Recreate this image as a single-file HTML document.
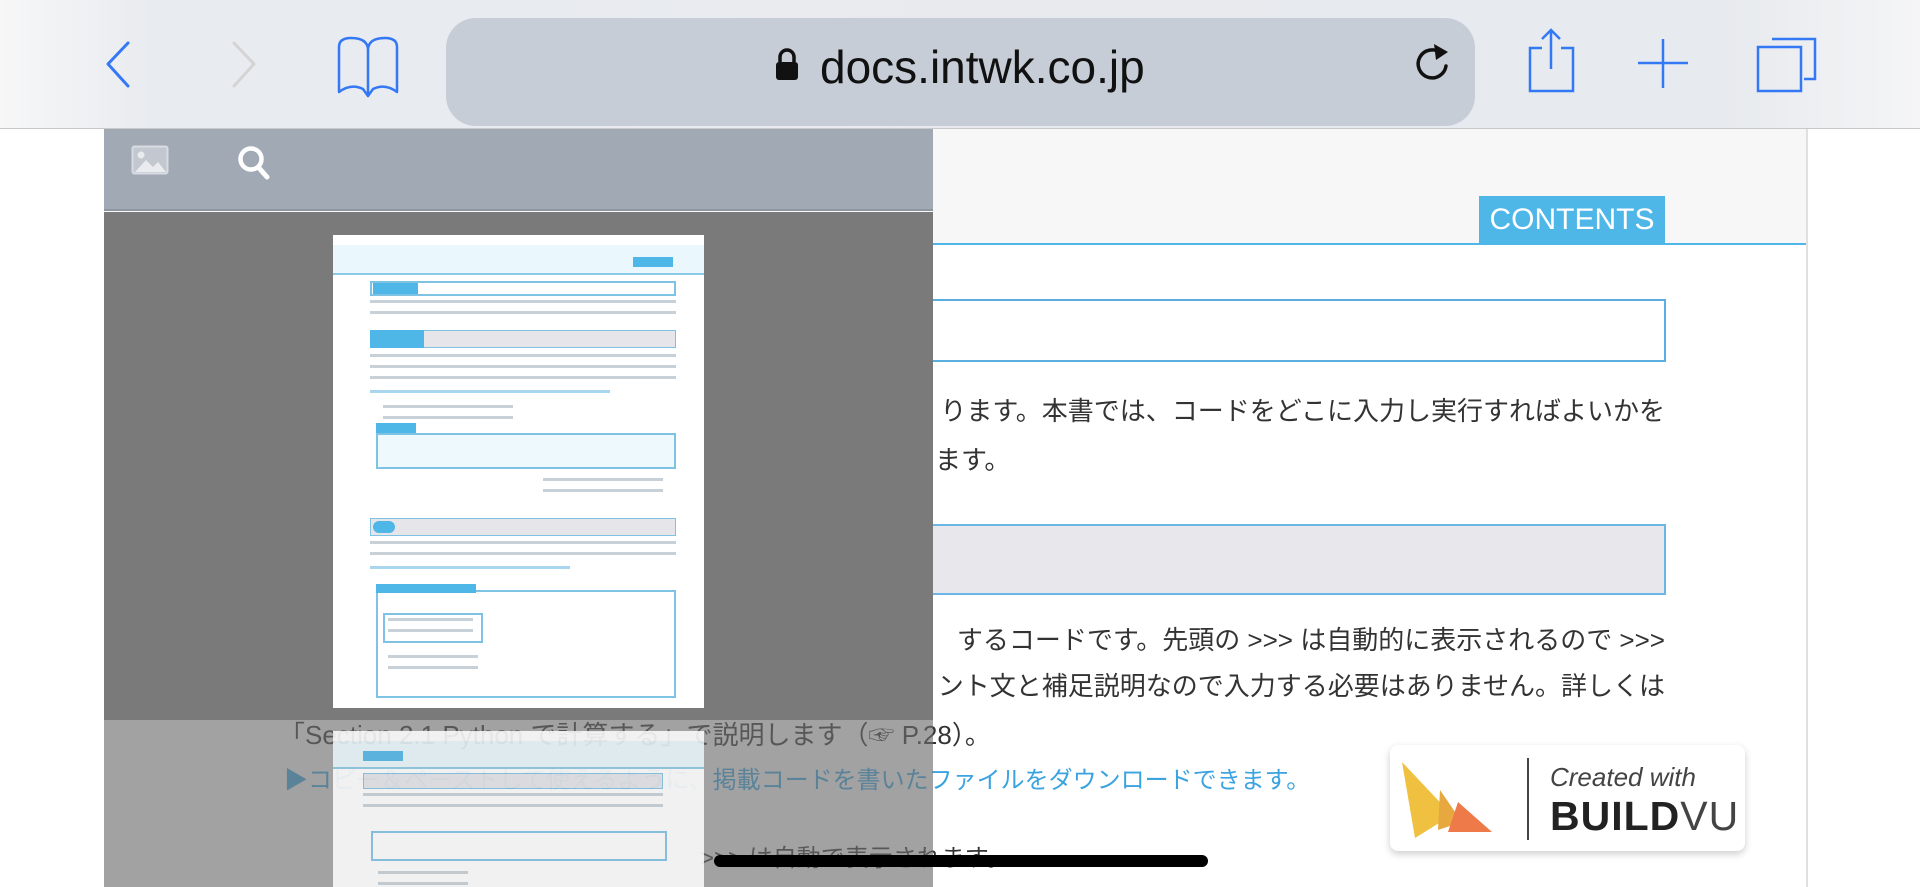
<!DOCTYPE html>
<html><head><meta charset="utf-8"><style>
*{margin:0;padding:0;box-sizing:border-box}
body{width:1920px;height:887px;overflow:hidden;background:#fff;position:relative;font-family:"Liberation Sans","Noto Sans CJK JP",sans-serif}
.abs{position:absolute}
.top{left:0;top:0;width:1920px;height:129px;background:linear-gradient(90deg,#f7f7f7 0,#e8ebef 8%,#e7eaee 90%,#f5f5f6 100%);border-bottom:1px solid #c9c9cc}
.pill{left:446px;top:18px;width:1029px;height:108px;border-radius:30px;background:#c7cdd7}
.url{left:820px;top:40px;font-size:46px;color:#111}
.page{left:104px;top:129px;width:1702px;height:758px;background:#f8f8f8}
.rside{left:1806px;top:129px;width:114px;height:758px;background:#fff;border-left:2px solid #e0e0e0}
.jt{font-size:26px;color:#333;white-space:nowrap;line-height:1}
.thumb{background:#fff;overflow:hidden}
.tl{position:absolute;background:repeating-linear-gradient(180deg,#c8d0d8 0 3px,transparent 3px 11px)}
.tb{position:absolute;background:repeating-linear-gradient(180deg,#a8d6ee 0 3px,transparent 3px 10px)}
</style></head><body>
<div class="abs top"></div>
<svg class="abs" style="left:0;top:0" width="1920" height="129">
<path d="M128 43 L108 64 L128 86" fill="none" stroke="#3478f6" stroke-width="3" stroke-linecap="round" stroke-linejoin="round"/>
<path d="M234 43 L254 64 L234 86" fill="none" stroke="#d4d4d4" stroke-width="3" stroke-linecap="round" stroke-linejoin="round"/>
<path d="M339 92 V47 Q339 38 351 38 Q367 38 368 49 Q369 38 385 38 Q397 38 397 47 V92 Q385 83 373 89 L368 96 L363 89 Q351 83 339 92 Z M368 49 V96" fill="none" stroke="#3478f6" stroke-width="2.5" stroke-linejoin="round"/>
</svg>
<div class="abs pill"></div>
<svg class="abs" style="left:774px;top:46px" width="26" height="36"><path d="M6 16 V11 A7 7 0 0 1 20 11 V16" fill="none" stroke="#111" stroke-width="3.5"/><rect x="2" y="16" width="22" height="18" rx="3" fill="#111"/></svg>
<div class="abs url">docs.intwk.co.jp</div>
<svg class="abs" style="left:1408px;top:38px" width="50" height="50">
<path d="M33 15 A14 14 0 1 0 38 28" fill="none" stroke="#111" stroke-width="3.5" stroke-linecap="round"/>
<path d="M26 6 L40 14 L28 22 Z" fill="#111"/>
</svg>
<svg class="abs" style="left:1520px;top:25px" width="400" height="75" fill="none" stroke="#3478f6" stroke-width="2.5">
<path d="M22 23 H10 V66 H53 V23 H41 M31 5 V44 M22 14 L31 5 L40 14"/>
<path d="M143 14 V63 M118 38 H168"/>
<path d="M252 14 H295 V54 H284 M238 22 H281 V66 H238 Z"/>
</svg>
<div class="abs page"></div>
<div class="abs rside"></div>
<div class="abs" style="left:933px;top:129px;width:873px;height:758px;background:#fff"></div>
<div class="abs" style="left:933px;top:129px;width:873px;height:114px;background:#f7f7f7"></div>
<div class="abs" style="left:1479px;top:196px;width:186px;height:47px;background:#4fb6e8;color:#fff;font-size:30px;line-height:47px;text-align:center">CONTENTS</div>
<div class="abs" style="left:933px;top:243px;width:873px;height:2px;background:#4fb6e8"></div>
<div class="abs" style="left:880px;top:299px;width:786px;height:63px;border:2px solid #5aaee0;background:#fff"></div>
<div class="abs jt" style="right:255px;top:398px">ります。本書では、コードをどこに入力し実行すればよいかを</div>
<div class="abs jt" style="left:935px;top:447px">ます。</div>
<div class="abs" style="left:880px;top:524px;width:786px;height:71px;border:2px solid #6ab6e6;background:#e8e8ec"></div>
<div class="abs jt" style="right:255px;top:627px">するコードです。先頭の &gt;&gt;&gt; は自動的に表示されるので &gt;&gt;&gt;</div>
<div class="abs jt" style="right:255px;top:673px">ント文と補足説明なので入力する必要はありません。詳しくは</div>
<div class="abs jt" style="left:279px;top:722px">「Section 2.1 Python で計算する」で説明します（☞ P.28）。</div>
<div class="abs jt" style="left:284px;top:769px;color:#3aa3e0;font-size:24px">▶コピー＆ペーストして使えるように、掲載コードを書いたファイルをダウンロードできます。</div>
<div class="abs jt" style="left:700px;top:847px;color:#333;font-size:24px">&gt;&gt;&gt; は自動で表示されます。</div>
<!-- left panel -->
<div class="abs" style="left:104px;top:129px;width:829px;height:82px;background:#a1a9b5;border-bottom:2px solid #8e96a2"></div>
<svg class="abs" style="left:131px;top:145px" width="40" height="32"><rect x="1.5" y="1.5" width="35" height="27" rx="2" fill="#c3c8d0" stroke="#d8dce2" stroke-width="2"/><circle cx="10" cy="10" r="3.5" fill="#e9ebee"/><path d="M4 27 L15 15 L22 22 L27 17 L35 27 Z" fill="#e9ebee"/></svg>
<svg class="abs" style="left:236px;top:144px" width="38" height="40"><circle cx="15" cy="15" r="10.5" fill="none" stroke="#fff" stroke-width="4.5"/><path d="M23 24 L31 33" stroke="#fff" stroke-width="5" stroke-linecap="round"/></svg>
<div class="abs" style="left:104px;top:212px;width:829px;height:508px;background:#7a7a7a"></div>
<div class="abs" style="left:104px;top:720px;width:829px;height:167px;background:rgba(110,110,110,0.62)"></div>
<div class="abs thumb" style="left:333px;top:235px;width:371px;height:473px">
<div class="abs" style="left:0;top:10px;width:371px;height:30px;background:#eaf7fc;border-bottom:2px solid #8cc9e4"></div>
<div class="abs" style="left:300px;top:22px;width:40px;height:10px;background:#4fb6e8"></div>
<div class="abs" style="left:37px;top:46px;width:306px;height:15px;border:2px solid #7fc3e4"></div>
<div class="abs" style="left:40px;top:48px;width:45px;height:11px;background:#4fb6e8"></div>
<div class="tl" style="left:37px;top:65px;width:306px;height:22px"></div>
<div class="abs" style="left:37px;top:95px;width:306px;height:18px;background:#e6e6ea;border:1px solid #7fc3e4"></div>
<div class="abs" style="left:37px;top:95px;width:54px;height:18px;background:#4fb6e8"></div>
<div class="tl" style="left:37px;top:119px;width:306px;height:33px"></div>
<div class="tb" style="left:37px;top:155px;width:240px;height:5px"></div>
<div class="tl" style="left:50px;top:170px;width:130px;height:16px"></div>
<div class="abs" style="left:43px;top:198px;width:300px;height:36px;border:2px solid #7fc3e4;background:#eef9fd"></div>
<div class="abs" style="left:43px;top:188px;width:40px;height:10px;background:#4fb6e8"></div>
<div class="tl" style="left:210px;top:243px;width:120px;height:16px"></div>
<div class="abs" style="left:37px;top:283px;width:306px;height:18px;background:#e6e6ea;border:1px solid #7fc3e4"></div>
<div class="abs" style="left:40px;top:286px;width:22px;height:12px;border-radius:6px;background:#4fb6e8"></div>
<div class="tl" style="left:37px;top:306px;width:306px;height:22px"></div>
<div class="tb" style="left:37px;top:331px;width:200px;height:5px"></div>
<div class="abs" style="left:43px;top:355px;width:300px;height:108px;border:2px solid #7fc3e4"></div>
<div class="abs" style="left:43px;top:349px;width:100px;height:9px;background:#4fb6e8"></div>
<div class="abs" style="left:50px;top:378px;width:100px;height:30px;border:2px solid #7fc3e4"></div>
<div class="tl" style="left:55px;top:383px;width:85px;height:22px"></div>
<div class="tl" style="left:55px;top:420px;width:90px;height:16px"></div>
</div>
<div class="abs thumb" style="left:333px;top:731px;width:371px;height:156px;opacity:0.85">
<div class="abs" style="left:0;top:10px;width:371px;height:28px;background:#eaf7fc;border-bottom:2px solid #8cc9e4"></div>
<div class="abs" style="left:30px;top:20px;width:40px;height:10px;background:#4fb6e8"></div>
<div class="abs" style="left:30px;top:42px;width:300px;height:16px;background:#e6e6ea;border:1px solid #7fc3e4"></div>
<div class="tl" style="left:30px;top:62px;width:300px;height:22px"></div>
<div class="abs" style="left:38px;top:100px;width:296px;height:30px;border:2px solid #7fc3e4"></div>
<div class="tl" style="left:45px;top:140px;width:90px;height:16px"></div>
</div>
<!-- buildvu badge -->
<div class="abs" style="left:1390px;top:745px;width:355px;height:106px;background:#fff;border-radius:8px;box-shadow:0 3px 8px rgba(0,0,0,0.2)"></div>
<svg class="abs" style="left:1400px;top:760px" width="110" height="80"><path d="M2 2 L52 55 L15 78 Z" fill="#f0c040"/><path d="M40 30 L62 62 L38 70 Z" fill="#e8a840"/><path d="M58 42 L92 72 L48 72 Z" fill="#ee7a4a"/></svg>
<div class="abs" style="left:1527px;top:758px;width:2px;height:82px;background:#444"></div>
<div class="abs" style="left:1550px;top:762px;font-size:26px;color:#444;font-style:italic">Created with</div>
<div class="abs" style="left:1550px;top:793px;font-size:41px;color:#222;font-weight:bold;letter-spacing:1px">BUILD<span style="font-weight:normal;color:#444">VU</span></div>
<div class="abs" style="left:714px;top:855px;width:494px;height:12px;border-radius:6px;background:#000"></div>
</body></html>
